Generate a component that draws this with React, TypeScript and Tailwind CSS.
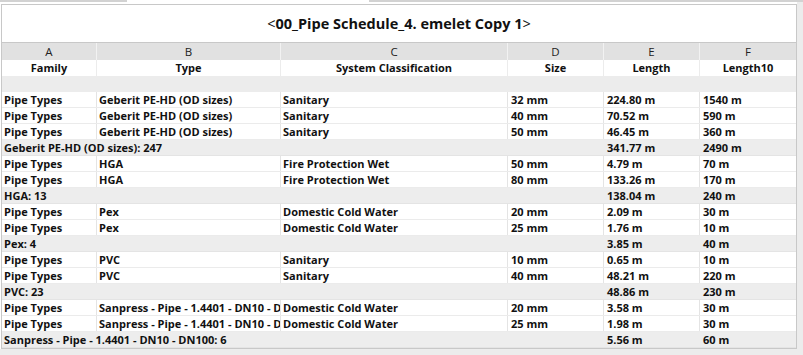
import React from 'react';

type Row =
  | { kind: 'data'; family: string; type: string; system: string; size: string; length: string; length10: string }
  | { kind: 'group'; label: string; length: string; length10: string };

const rows: Row[] = [
  { kind: 'data', family: 'Pipe Types', type: 'Geberit PE-HD (OD sizes)', system: 'Sanitary', size: '32 mm', length: '224.80 m', length10: '1540 m' },
  { kind: 'data', family: 'Pipe Types', type: 'Geberit PE-HD (OD sizes)', system: 'Sanitary', size: '40 mm', length: '70.52 m', length10: '590 m' },
  { kind: 'data', family: 'Pipe Types', type: 'Geberit PE-HD (OD sizes)', system: 'Sanitary', size: '50 mm', length: '46.45 m', length10: '360 m' },
  { kind: 'group', label: 'Geberit PE-HD (OD sizes): 247', length: '341.77 m', length10: '2490 m' },
  { kind: 'data', family: 'Pipe Types', type: 'HGA', system: 'Fire Protection Wet', size: '50 mm', length: '4.79 m', length10: '70 m' },
  { kind: 'data', family: 'Pipe Types', type: 'HGA', system: 'Fire Protection Wet', size: '80 mm', length: '133.26 m', length10: '170 m' },
  { kind: 'group', label: 'HGA: 13', length: '138.04 m', length10: '240 m' },
  { kind: 'data', family: 'Pipe Types', type: 'Pex', system: 'Domestic Cold Water', size: '20 mm', length: '2.09 m', length10: '30 m' },
  { kind: 'data', family: 'Pipe Types', type: 'Pex', system: 'Domestic Cold Water', size: '25 mm', length: '1.76 m', length10: '10 m' },
  { kind: 'group', label: 'Pex: 4', length: '3.85 m', length10: '40 m' },
  { kind: 'data', family: 'Pipe Types', type: 'PVC', system: 'Sanitary', size: '10 mm', length: '0.65 m', length10: '10 m' },
  { kind: 'data', family: 'Pipe Types', type: 'PVC', system: 'Sanitary', size: '40 mm', length: '48.21 m', length10: '220 m' },
  { kind: 'group', label: 'PVC: 23', length: '48.86 m', length10: '230 m' },
  { kind: 'data', family: 'Pipe Types', type: 'Sanpress - Pipe - 1.4401 - DN10 - DN100', system: 'Domestic Cold Water', size: '20 mm', length: '3.58 m', length10: '30 m' },
  { kind: 'data', family: 'Pipe Types', type: 'Sanpress - Pipe - 1.4401 - DN10 - DN100', system: 'Domestic Cold Water', size: '25 mm', length: '1.98 m', length10: '30 m' },
  { kind: 'group', label: 'Sanpress - Pipe - 1.4401 - DN10 - DN100: 6', length: '5.56 m', length10: '60 m' },
];

const cols = 'grid grid-cols-[95px_184px_227px_96px_96px_96px]';
const cell = 'overflow-hidden whitespace-nowrap border-r border-[#e4e4e4] leading-[15px]';

const App: React.FC = () => {
  return (
    <div
      className="w-[803px] h-[355px] bg-[#ececec] overflow-hidden text-[#111]"
      style={{ fontFamily: '"Open Sans", "Noto Sans", sans-serif' }}
    >
      {/* top strip */}
      <div className="flex h-[2px]">
        <div className="w-[127px] bg-[#d2d2d2]" />
        <div className="w-[242px] bg-white" />
        <div className="flex-1 bg-[#d2d2d2]" />
      </div>

      <div className="w-[797px] bg-white pt-[2px] pl-[1px]">
        <div className="border border-[#c8c8c8] w-[796px]">
          {/* title */}
          <div className="h-[38px] border-b border-[#c8c8c8] flex items-center justify-center text-[14.5px] font-bold">
            <span className="font-normal">&lt;</span>00_Pipe Schedule_4. emelet Copy 1<span className="font-normal">&gt;</span>
          </div>

          {/* column letters */}
          <div className={`${cols} h-[17px] bg-[#e1e1e1] text-[11.5px] text-[#222]`}>
            {['A', 'B', 'C', 'D', 'E', 'F'].map((l, i) => (
              <div key={l} className={`${cell} text-center leading-[17px] border-[#f2f2f2] ${i === 5 ? 'border-r-0' : ''}`}>
                {l}
              </div>
            ))}
          </div>

          {/* field names */}
          <div className={`${cols} h-[16px] bg-white text-[11px] font-bold`}>
            {['Family', 'Type', 'System Classification', 'Size', 'Length', 'Length10'].map((h, i) => (
              <div key={h} className={`${cell} text-center leading-[16px] border-[#ececec] ${i === 5 ? 'border-r-0' : ''}`}>
                {h}
              </div>
            ))}
          </div>

          {/* blank header row */}
          <div className="h-[16px] bg-[#ececec]" />

          {rows.map((r, idx) =>
            r.kind === 'data' ? (
              <div key={idx} className={`${cols} h-[16px] bg-white border-b border-[#ebebeb] text-[11px] font-bold`}>
                <div className={`${cell} pl-[2px]`}>{r.family}</div>
                <div className={`${cell} pl-[2px]`}>{r.type}</div>
                <div className={`${cell} pl-[2px]`}>{r.system}</div>
                <div className={`${cell} pl-[3px]`}>{r.size}</div>
                <div className={`${cell} pl-[3px]`}>{r.length}</div>
                <div className={`${cell} pl-[3px] border-r-0`}>{r.length10}</div>
              </div>
            ) : (
              <div key={idx} className={`${cols} h-[16px] bg-[#ededed] border-b border-[#e4e4e4] text-[11px] font-bold`}>
                <div className="col-span-4 overflow-hidden whitespace-nowrap pl-[2px] leading-[15px]">{r.label}</div>
                <div className={`${cell} pl-[3px] border-[#ededed]`}>{r.length}</div>
                <div className={`${cell} pl-[3px] border-r-0`}>{r.length10}</div>
              </div>
            )
          )}
        </div>
      </div>
    </div>
  );
};

export default App;
